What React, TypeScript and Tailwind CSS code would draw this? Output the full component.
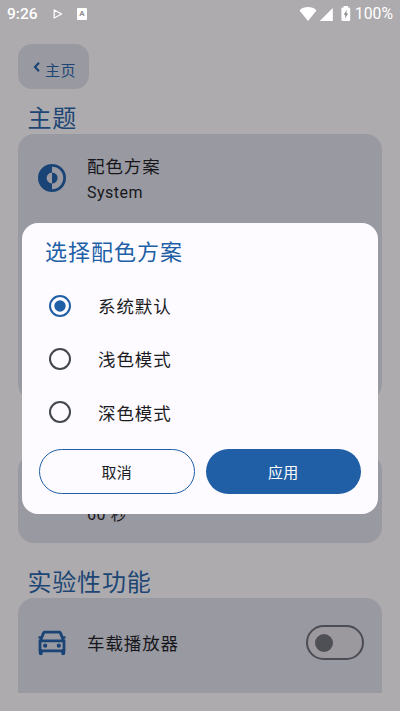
import React, { useState } from 'react';

type Scheme = 'system' | 'light' | 'dark';

const schemes: Array<{ id: Scheme; label: string }> = [
  { id: 'system', label: '系统默认' },
  { id: 'light', label: '浅色模式' },
  { id: 'dark', label: '深色模式' },
];

const StatusBar: React.FC = () => (
  <div className="flex h-7 items-center pl-[7px] pr-[7px] text-white">
    <span className="w-[31px] text-[15.5px] font-medium leading-7">9:26</span>
    <svg className="ml-[15px]" width="10" height="12" viewBox="0 0 10 12" fill="none" stroke="currentColor" strokeWidth="1.3">
      <path d="M1.2 2 L8.6 6 L1.2 10 Z" strokeLinejoin="round" />
    </svg>
    <span className="ml-[14px] flex h-3 w-[10px] items-center justify-center rounded-[1px] bg-white text-[8px] font-bold leading-none text-[#8f8d8f]">
      A
    </span>
    <svg className="ml-auto" width="53" height="18" viewBox="0 0 53 18" fill="currentColor">
      {/* wifi */}
      <path d="M1.5 5.4 C6 1 14 1 18.5 5.4 L10 16 Z" />
      {/* signal */}
      <path d="M34.8 3 V16 H21.8 Z" />
      {/* battery with charging bolt */}
      <path d="M45.6 1 H50 V2.4 H51 Q52.2 2.4 52.2 3.6 V14.7 Q52.2 15.9 51 15.9 H44.6 Q43.4 15.9 43.4 14.7 V3.6 Q43.4 2.4 44.6 2.4 H45.6 Z" />
      <path d="M48.8 5 L45.6 9.8 H47.4 L47 13.4 L50.2 8.4 H48.4 Z" fill="#8f8d8f" />
    </svg>
    <span className="ml-[4px] text-[15.8px] leading-7">100%</span>
  </div>
);

const ThemeIcon: React.FC = () => (
  <svg width="28" height="28" viewBox="0 0 28 28" fill="#1a4476">
    <circle cx="14" cy="14" r="12.6" fill="none" stroke="#1a4476" strokeWidth="2.8" />
    <path d="M14 1 A13 13 0 0 0 14 27 V19.4 A5.4 5.4 0 0 1 14 8.6 Z" />
    <path d="M14 8.4 A5.6 5.6 0 0 1 14 19.6 Z" />
  </svg>
);

const CarIcon: React.FC = () => (
  <svg width="30" height="26" viewBox="0 0 30 26" fill="none" stroke="#1a4476" strokeWidth="2.8" strokeLinejoin="round" strokeLinecap="round">
    <path d="M3.3 11 L6.6 2.9 Q7 2.2 7.9 2.2 H22.1 Q23 2.2 23.4 2.9 L26.7 11" />
    <path d="M3 10.8 H27 V20.8 H3 Z" />
    <path d="M2.4 7.4 H4.2 M25.8 7.4 H27.6" strokeWidth="2.4" />
    <path d="M3.8 21 V23.2 M26.2 21 V23.2" strokeWidth="4" />
    <circle cx="8.2" cy="15.7" r="2.1" fill="#1a4476" stroke="none" />
    <circle cx="21.8" cy="15.7" r="2.1" fill="#1a4476" stroke="none" />
  </svg>
);

const SectionTitle: React.FC<{ children: React.ReactNode }> = ({ children }) => (
  <h2 className="ml-[9.5px] pt-[2px] text-[24px] leading-[34px] tracking-[0.8px] text-[#1d4675]">{children}</h2>
);

const Radio: React.FC<{ checked: boolean }> = ({ checked }) => (
  <svg width="22" height="22" viewBox="0 0 22 22">
    <circle cx="11" cy="11" r="10" fill="none" stroke={checked ? '#205fa6' : '#44464e'} strokeWidth="2" />
    {checked && <circle cx="11" cy="11" r="5.7" fill="#205fa6" />}
  </svg>
);

const SchemeDialog: React.FC = () => {
  const [selected, setSelected] = useState<Scheme>('system');

  return (
    <div role="dialog" className="h-[291px] w-[356px] rounded-[16px] bg-[#fdfbff] px-[17px] pt-[13px]">
      <h1 className="ml-[6px] text-[22px] leading-[34px] tracking-[1px] text-[#205fa6]">选择配色方案</h1>
      <div className="mt-[9px] flex flex-col">
        {schemes.map(({ id, label }) => (
          <button
            key={id}
            className="flex h-[53.3px] items-center gap-[27px] pl-[10px] text-[17.5px] tracking-[0.9px] text-[#1b1b1f]"
            onClick={() => setSelected(id)}
          >
            <Radio checked={selected === id} />
            <span className="pt-[3px]">{label}</span>
          </button>
        ))}
      </div>
      <div className="mt-[10px] flex gap-[11px] text-[15px] tracking-[0.3px]">
        <button className="h-[45px] w-[155.5px] rounded-full border border-[#205fa6] pt-[3px] text-[#1b1b1f]">取消</button>
        <button className="h-[45px] w-[155.5px] rounded-full bg-[#205fa6] pt-[3px] text-white">应用</button>
      </div>
    </div>
  );
};

export default function App() {
  return (
    <div className="relative h-[711px] w-[400px] overflow-hidden bg-[#adabad] font-['Roboto','Noto_Sans_CJK_SC',sans-serif] text-[#17171b]">
      <StatusBar />
      <div className="flex h-[665px] flex-col overflow-hidden px-[18px] pt-4">
        <button className="flex h-[45px] w-[70.5px] shrink-0 items-center rounded-[14px] bg-[#9999a1] pl-[15px] text-[#1d4675]">
          <svg width="8" height="12" viewBox="0 0 8 12" fill="none" stroke="currentColor" strokeWidth="2.2">
            <path d="M6 1.7 L2 6 L6 10.3" />
          </svg>
          <span className="ml-1 pt-[9px] text-[15px] tracking-[0.5px]">主页</span>
        </button>

        <div className="mt-[11px] h-[34px]">
          <SectionTitle>主题</SectionTitle>
        </div>
        <div className="h-[266px] shrink-0 rounded-[16px] bg-[#9999a1] pl-5 pt-[19px]">
          <div className="flex items-start gap-[21px]">
            <div className="pt-[11px]">
              <ThemeIcon />
            </div>
            <div className="pt-[2px]">
              <div className="text-[17.5px] leading-[25px] tracking-[0.9px]">配色方案</div>
              <div className="text-[16px] leading-[25px] tracking-[0.5px]">System</div>
            </div>
          </div>
        </div>

        <div className="mt-[54px] h-[89px] shrink-0 rounded-[16px] bg-[#9999a1] pl-[69px] pt-[49px] text-[16px] leading-[24px] tracking-[0.6px]">
          60 秒
        </div>

        <div className="mt-[21px] h-[34px]">
          <SectionTitle>实验性功能</SectionTitle>
        </div>
        <div className="flex h-[95px] shrink-0 items-center rounded-t-[16px] bg-[#9999a1] pb-[6px] pl-[19px] pr-[18px]">
          <CarIcon />
          <span className="ml-5 pt-[3px] text-[17.5px] tracking-[0.9px]">车载播放器</span>
          <span
            role="switch"
            aria-checked={false}
            className="ml-auto flex h-[35px] w-[58px] items-center rounded-full border-2 border-[#4c4d54] bg-[#9b989e] pl-[7px]"
          >
            <span className="size-[18px] rounded-full bg-[#4f5055]" />
          </span>
        </div>
      </div>

      {/* Modal layer over the settings list */}
      <div className="absolute inset-0 flex items-start justify-center pt-[223px]">
        <SchemeDialog />
      </div>
    </div>
  );
}
